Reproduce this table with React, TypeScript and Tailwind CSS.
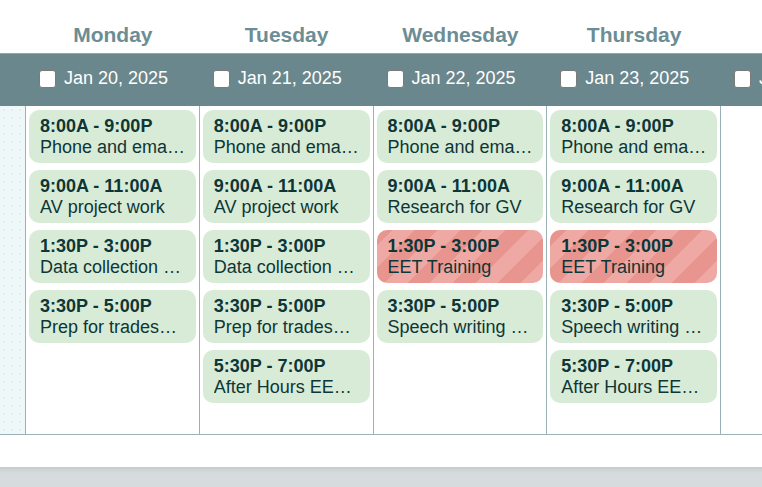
import React from 'react';

type Ev = { time: string; title: string; alert?: boolean };

const days: { name: string; date: string; events: Ev[] }[] = [
  {
    name: 'Monday',
    date: 'Jan 20, 2025',
    events: [
      { time: '8:00A - 9:00P', title: 'Phone and email follow up' },
      { time: '9:00A - 11:00A', title: 'AV project work' },
      { time: '1:30P - 3:00P', title: 'Data collection for report' },
      { time: '3:30P - 5:00P', title: 'Prep for tradeshow booth' },
    ],
  },
  {
    name: 'Tuesday',
    date: 'Jan 21, 2025',
    events: [
      { time: '8:00A - 9:00P', title: 'Phone and email follow up' },
      { time: '9:00A - 11:00A', title: 'AV project work' },
      { time: '1:30P - 3:00P', title: 'Data collection for report' },
      { time: '3:30P - 5:00P', title: 'Prep for tradeshow booth' },
      { time: '5:30P - 7:00P', title: 'After Hours EET meetup' },
    ],
  },
  {
    name: 'Wednesday',
    date: 'Jan 22, 2025',
    events: [
      { time: '8:00A - 9:00P', title: 'Phone and email follow up' },
      { time: '9:00A - 11:00A', title: 'Research for GV' },
      { time: '1:30P - 3:00P', title: 'EET Training', alert: true },
      { time: '3:30P - 5:00P', title: 'Speech writing for gala' },
    ],
  },
  {
    name: 'Thursday',
    date: 'Jan 23, 2025',
    events: [
      { time: '8:00A - 9:00P', title: 'Phone and email follow up' },
      { time: '9:00A - 11:00A', title: 'Research for GV' },
      { time: '1:30P - 3:00P', title: 'EET Training', alert: true },
      { time: '3:30P - 5:00P', title: 'Speech writing for gala' },
      { time: '5:30P - 7:00P', title: 'After Hours EET meetup' },
    ],
  },
  {
    name: 'Friday',
    date: 'Jan 24, 2025',
    events: [],
  },
];

function EventCard({ ev }: { ev: Ev }) {
  const base = 'h-[53px] rounded-[10px] pl-[11px] pr-[10px] pt-[6px] text-[#0e3636] leading-[21px] text-[18px]';
  const look = ev.alert
    ? 'bg-[repeating-linear-gradient(-45deg,#eea9a4_0px,#eea9a4_16px,#e9958f_16px,#e9958f_32px)]'
    : 'bg-[#d8ebd6]';
  return (
    <div className={`${base} ${look}`}>
      <div className="font-bold whitespace-nowrap overflow-hidden text-ellipsis">{ev.time}</div>
      <div className="whitespace-nowrap overflow-hidden text-ellipsis">{ev.title}</div>
    </div>
  );
}

export default function App() {
  return (
    <div className="w-[762px] h-[487px] overflow-hidden bg-white font-['Liberation_Sans',Arial,sans-serif] flex flex-col">
      {/* day names */}
      <div className="flex h-[53px] shrink-0">
        <div className="w-[26px] shrink-0" />
        {days.map((d) => (
          <div key={d.name} className="w-[173.75px] shrink-0 flex items-center justify-center pt-[16px] text-[21px] font-bold text-[#6c8d94]">
            {d.name}
          </div>
        ))}
      </div>

      {/* date band */}
      <div className="flex h-[53px] shrink-0 bg-[#6a878d] border-t border-[#8fa8ad]">
        <div className="w-[26px] shrink-0" />
        {days.map((d) => (
          <label key={d.date} className="w-[173.75px] shrink-0 flex items-center pl-[13px] pb-[4px] gap-[8px] text-[18px] text-white">
            <span className="w-[17px] h-[18px] rounded-[3px] bg-white border border-[#7a7a7a] shrink-0 mt-[2px]" />
            <span className="whitespace-nowrap">{d.date}</span>
          </label>
        ))}
      </div>

      {/* grid body */}
      <div className="flex h-[329px] shrink-0 border-b border-[#9ab1b7]">
        <div className="w-[26px] shrink-0 border-r border-[#9ab1b7] bg-[#eff8f8] bg-[radial-gradient(#e2eeee_1px,transparent_1px)] bg-[length:8px_8px]" />
        {days.map((d) => (
          <div key={d.name} className="w-[173.75px] shrink-0 border-r border-[#9ab1b7] px-[3px] pt-[4px] flex flex-col gap-[7px]">
            {d.events.map((ev, i) => (
              <EventCard key={i} ev={ev} />
            ))}
          </div>
        ))}
      </div>

      <div className="h-[32px] shrink-0 bg-white" />
      <div className="flex-1 bg-[#d6dcdd] bg-[linear-gradient(to_bottom,#c4cccd,#d6dcdd_6px)]" />
    </div>
  );
}
